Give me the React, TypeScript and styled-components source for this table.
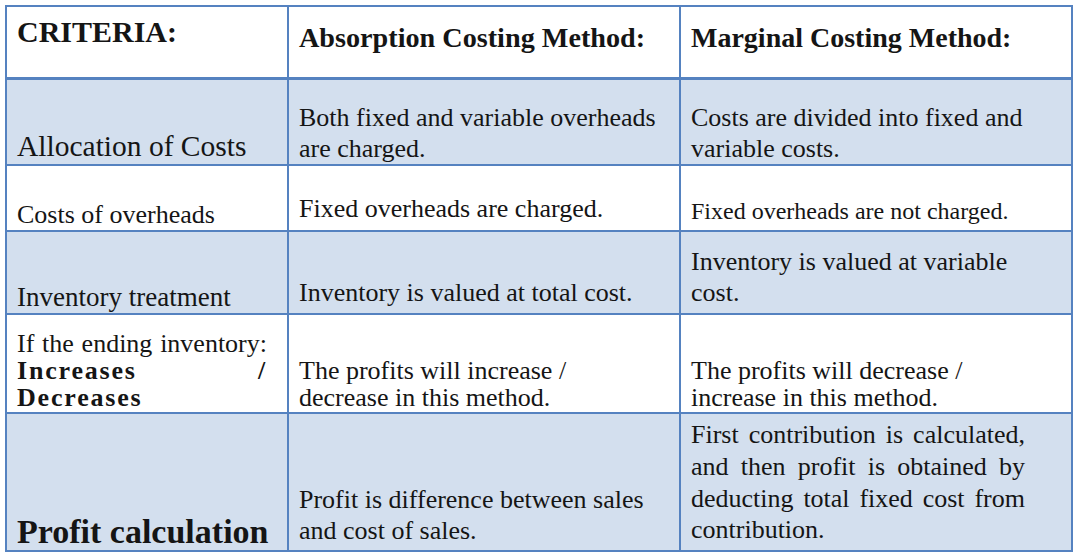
import React from "react";
import styled, { createGlobalStyle } from "styled-components";

const Global = createGlobalStyle`
  html, body { margin: 0; padding: 0; background: #ffffff; }
  body { font-family: "Liberation Serif", "Times New Roman", serif; color: #151515; }
`;

const Page = styled.div`
  padding: 5px 0 0 5px;
  width: 1080px;
  height: 558px;
  box-sizing: border-box;
  overflow: hidden;
`;

const BORDER = "#5582c0";
const SHADE = "#d3dfee";

const Grid = styled.div`
  display: grid;
  grid-template-columns: 282px 392px 392px;
  grid-template-rows: 73px 86px 66px 83px 99px 138px;
  width: 1068px;
  border-left: 2px solid ${BORDER};
  border-top: 2px solid ${BORDER};
  box-sizing: border-box;
`;

const Cell = styled.div<{ $shade?: boolean; $head?: boolean; $pr?: number; $pb?: number; $lh?: string }>`
  box-sizing: border-box;
  display: flex;
  flex-direction: column;
  justify-content: ${(p) => (p.$head ? "flex-start" : "flex-end")};
  background: ${(p) => (p.$shade ? SHADE : "#ffffff")};
  border-right: 2px solid ${BORDER};
  border-bottom: ${(p) => (p.$head ? 3 : 2)}px solid ${BORDER};
  padding: 0 ${(p) => p.$pr ?? 10}px ${(p) => p.$pb ?? 3}px 10px;
  font-size: 26px;
  line-height: ${(p) => p.$lh ?? "1.2"};
  overflow: hidden;
`;

const HeadText = styled.div<{ $size: number; $top: number }>`
  font-weight: 700;
  font-size: ${(p) => p.$size}px;
  line-height: 1.2;
  padding-top: ${(p) => p.$top}px;
  white-space: nowrap;
`;

const Label = styled.div<{ $size?: number; $bold?: boolean; $lh?: string }>`
  font-size: ${(p) => p.$size ?? 26}px;
  font-weight: ${(p) => (p.$bold ? 700 : 400)};
  line-height: ${(p) => p.$lh ?? "1.2"};
  white-space: nowrap;
`;

const Para = styled.div<{ $size?: number }>`
  font-size: ${(p) => p.$size ?? 26}px;
`;

const Justified = styled.div<{ $lh?: string }>`
  text-align: justify;
  line-height: ${(p) => p.$lh ?? "1.22"};
`;

const Strong = styled.strong`
  font-weight: 700;
  letter-spacing: 1.8px;
`;

export default function App() {
  return (
    <>
      <Global />
      <Page>
        <Grid>
          <Cell $head>
            <HeadText $size={30} $top={7}>CRITERIA:</HeadText>
          </Cell>
          <Cell $head>
            <HeadText $size={28.2} $top={14}>Absorption Costing Method:</HeadText>
          </Cell>
          <Cell $head>
            <HeadText $size={28} $top={14}>Marginal Costing Method:</HeadText>
          </Cell>

          <Cell $shade $pb={0}>
            <Label $size={29.5}>Allocation of Costs</Label>
          </Cell>
          <Cell $shade $pb={0}>
            <Para>Both fixed and variable overheads are charged.</Para>
          </Cell>
          <Cell $shade $pr={46} $pb={0}>
            <Para>Costs are divided into fixed and variable costs.</Para>
          </Cell>

          <Cell $pb={0}>
            <Label>Costs of overheads</Label>
          </Cell>
          <Cell $pb={6}>
            <Para>Fixed overheads are charged.</Para>
          </Cell>
          <Cell $pr={46} $pb={4}>
            <Para $size={24}>Fixed overheads are not charged.</Para>
          </Cell>

          <Cell $shade $pb={0}>
            <Label $size={27} $lh="1.1">Inventory treatment</Label>
          </Cell>
          <Cell $shade $pb={5}>
            <Para>Inventory is valued at total cost.</Para>
          </Cell>
          <Cell $shade $pr={46} $pb={5}>
            <Para>Inventory is valued at variable cost.</Para>
          </Cell>

          <Cell $lh="27px" $pr={20} $pb={1}>
            <Justified $lh="27px">
              If the ending inventory: <Strong>Increases / Decreases</Strong>
            </Justified>
          </Cell>
          <Cell $lh="27px" $pb={1}>
            <Para>The profits will increase /<br />decrease in this method.</Para>
          </Cell>
          <Cell $lh="27px" $pr={46} $pb={1}>
            <Para>The profits will decrease /<br />increase in this method.</Para>
          </Cell>

          <Cell $shade $pb={0}>
            <Label $size={34} $bold $lh="1.05">Profit calculation</Label>
          </Cell>
          <Cell $shade $pb={4}>
            <Para>Profit is difference between sales and cost of sales.</Para>
          </Cell>
          <Cell $shade $pr={46} $pb={4}>
            <Justified>
              First contribution is calculated, and then profit is obtained by deducting total fixed cost from
              contribution.
            </Justified>
          </Cell>
        </Grid>
      </Page>
    </>
  );
}
